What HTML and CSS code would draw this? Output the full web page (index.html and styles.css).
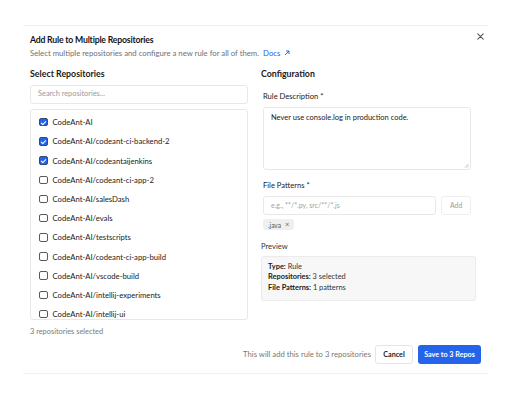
FILE: index.html
```html
<!DOCTYPE html>
<html>
<head>
<meta charset="utf-8">
<link rel="stylesheet" href="styles.css">
</head>
<body>
<div class="modal">
  <button class="close" aria-label="Close">
    <svg width="7" height="7" viewBox="0 0 7 7"><path d="M0.8 0.8L6.2 6.2M6.2 0.8L0.8 6.2" stroke="#555" stroke-width="1.1" stroke-linecap="round"/></svg>
  </button>
  <div class="header">
    <h1 class="title">Add Rule to Multiple Repositories</h1>
    <p class="subtitle">Select multiple repositories and configure a new rule for all of them. <a class="docs">Docs <svg width="6" height="6" viewBox="0 0 6 6"><path d="M1 5L5 1M2 1H5V4" stroke="#2563eb" stroke-width="1" fill="none"/></svg></a></p>
  </div>
  <div class="body">
    <div class="col-left">
      <h2 class="section">Select Repositories</h2>
      <div class="search">Search repositories...</div>
      <div class="list">
        <div class="row"><span class="cb checked"></span>CodeAnt-AI</div>
        <div class="row"><span class="cb checked"></span>CodeAnt-AI/codeant-ci-backend-2</div>
        <div class="row"><span class="cb checked"></span>CodeAnt-AI/codeantaijenkins</div>
        <div class="row"><span class="cb"></span>CodeAnt-AI/codeant-ci-app-2</div>
        <div class="row"><span class="cb"></span>CodeAnt-AI/salesDash</div>
        <div class="row"><span class="cb"></span>CodeAnt-AI/evals</div>
        <div class="row"><span class="cb"></span>CodeAnt-AI/testscripts</div>
        <div class="row"><span class="cb"></span>CodeAnt-AI/codeant-ci-app-build</div>
        <div class="row"><span class="cb"></span>CodeAnt-AI/vscode-build</div>
        <div class="row"><span class="cb"></span>CodeAnt-AI/intellij-experiments</div>
        <div class="row"><span class="cb"></span>CodeAnt-AI/intellij-ui</div>
      </div>
      <div class="count">3 repositories selected</div>
    </div>
    <div class="col-right">
      <h2 class="section">Configuration</h2>
      <div class="field">
        <div class="label">Rule Description *</div>
        <div class="textarea">Never use console.log in production code.
          <svg class="grip" width="5" height="5" viewBox="0 0 5 5"><path d="M4.5 1L1 4.5M4.5 3L3 4.5" stroke="#aaa" stroke-width="0.7"/></svg>
        </div>
        <div class="label label-gap">File Patterns *</div>
        <div class="pattern-row">
          <div class="input">e.g., **/*.py, src/**/*.js</div>
          <div class="add">Add</div>
        </div>
        <div class="chips"><span class="chip">.java <span class="x">×</span></span></div>
      </div>
      <div class="label preview-label">Preview</div>
      <div class="preview">
        <div><b>Type:</b> Rule</div>
        <div><b>Repositories:</b> 3 selected</div>
        <div><b>File Patterns:</b> 1 patterns</div>
      </div>
    </div>
  </div>
  <div class="footer">
    <span class="note">This will add this rule to 3 repositories</span>
    <button class="btn cancel">Cancel</button>
    <button class="btn save">Save to 3 Repos</button>
  </div>
</div>
</body>
</html>
```

FILE: styles.css
```css
* { box-sizing: border-box; }
html, body { margin: 0; padding: 0; background: #fff; }
body {
  font-family: Lato, "Noto Sans", sans-serif;
  color: #1f2328;
  width: 512px;
  height: 401px;
  overflow: hidden;
}
.modal {
  position: relative;
  margin: 25px 0 0 23px;
  width: 466px;
  height: 349px;
  border-top: 1px solid #f1f1f1;
  border-bottom: 1px solid #f1f1f1;
  padding: 0 8px 0 7px;
}
.close {
  position: absolute;
  right: 4px;
  top: 6px;
  width: 9px;
  height: 9px;
  padding: 1px;
  border: 0;
  background: none;
  display: flex;
  align-items: center;
  justify-content: center;
}
.header { padding-top: 8px; }
.title {
  margin: 0;
  font-size: 8.7px;
  line-height: 12px;
  font-weight: 700;
  letter-spacing: -0.2px;
  color: #141414;
}
.subtitle {
  margin: 2px 0 0;
  font-size: 7.75px;
  line-height: 10px;
  color: #707075;
}
.docs { color: #2563eb; margin-left: 2px; }
.docs svg { margin-left: 2px; vertical-align: 0; }
.body {
  display: grid;
  grid-template-columns: 218px 215px;
  column-gap: 13px;
  margin-top: 10px;
}
.section {
  margin: 0;
  font-size: 8.8px;
  line-height: 12px;
  font-weight: 700;
  color: #1a1a1a;
}
.search {
  margin-top: 5px;
  height: 18.5px;
  border: 1px solid #e8e8e8;
  border-radius: 3px;
  padding-left: 7px;
  font-size: 7.4px;
  line-height: 16.5px;
  color: #9a9a9a;
}
.list {
  margin-top: 5.5px;
  height: 211px;
  border: 1px solid #e8e8e8;
  border-radius: 3px;
  padding: 2.6px 0 0 8px;
  overflow: hidden;
}
.row {
  display: flex;
  align-items: center;
  gap: 5px;
  height: 19.2px;
  font-size: 7.7px;
  color: #222;
}
.cb {
  flex: none;
  width: 8.5px;
  height: 8.5px;
  border: 1px solid #5a5a5a;
  border-radius: 2px;
  background: #fff;
  position: relative;
}
.cb.checked {
  background: #2563eb;
  border-color: #3a4a6a;
}
.cb.checked::after {
  content: "";
  position: absolute;
  left: 2.2px;
  top: 0.6px;
  width: 2px;
  height: 4px;
  border: solid #fff;
  border-width: 0 1px 1px 0;
  transform: rotate(45deg);
}
.count {
  margin-top: 7px;
  font-size: 7.4px;
  line-height: 10px;
  color: #7a7a7a;
}
.field { padding: 0 2px; width: 212px; }
.label {
  font-size: 7.6px;
  line-height: 10px;
  color: #222;
  margin-top: 11px;
}
.label-gap { margin-top: 10px; }
.textarea {
  position: relative;
  margin-top: 6px;
  height: 63px;
  border: 1px solid #e8e8e8;
  border-radius: 3px;
  padding: 5px 7px;
  font-size: 7.5px;
  line-height: 10px;
  color: #222;
}
.grip { position: absolute; right: 1px; bottom: 1px; }
.pattern-row {
  display: flex;
  gap: 5px;
  margin-top: 6px;
}
.input {
  width: 175px;
  height: 18.5px;
  border: 1px solid #e8e8e8;
  border-radius: 3px;
  padding-left: 7px;
  font-size: 7px;
  line-height: 16.5px;
  color: #a0a0a0;
}
.add {
  width: 30px;
  height: 18.5px;
  border: 1px solid #eeeeee;
  border-radius: 3px;
  text-align: center;
  font-size: 6.8px;
  line-height: 16.5px;
  color: #9a9a9a;
}
.chips { margin-top: 4.5px; display: flex; }
.chip {
  display: inline-flex;
  align-items: center;
  gap: 4px;
  height: 11px;
  padding: 0 5px 0 5px;
  background: #efefef;
  border-radius: 3px;
  font-size: 6.6px;
  color: #555;
}
.chip .x { font-size: 7.5px; color: #666; }
.preview-label { margin-top: 10.5px; color: #333; }
.preview {
  margin-top: 5px;
  height: 45px;
  border: 1px solid #ebebeb;
  border-radius: 3px;
  background: #f7f7f7;
  padding: 5.4px 6px;
  font-size: 7.4px;
  line-height: 10.6px;
  color: #333;
}
.preview b { color: #1a1a1a; font-weight: 700; }
.footer {
  display: flex;
  justify-content: flex-end;
  align-items: center;
  margin-top: 7.5px;
}
.note {
  font-size: 7.7px;
  color: #777;
  margin-right: 4px;
}
.btn {
  height: 19.5px;
  border-radius: 3px;
  font-family: Lato, "Noto Sans", sans-serif;
  font-size: 7.2px;
  padding: 0;
}
.cancel {
  width: 38px;
  border: 1px solid #e5e5e5;
  background: #fff;
  color: #222;
  font-weight: 700;
  margin-right: 5px;
}
.save {
  width: 63px;
  border: 0;
  background: #2563eb;
  color: #fff;
  font-weight: 700;
}
```
